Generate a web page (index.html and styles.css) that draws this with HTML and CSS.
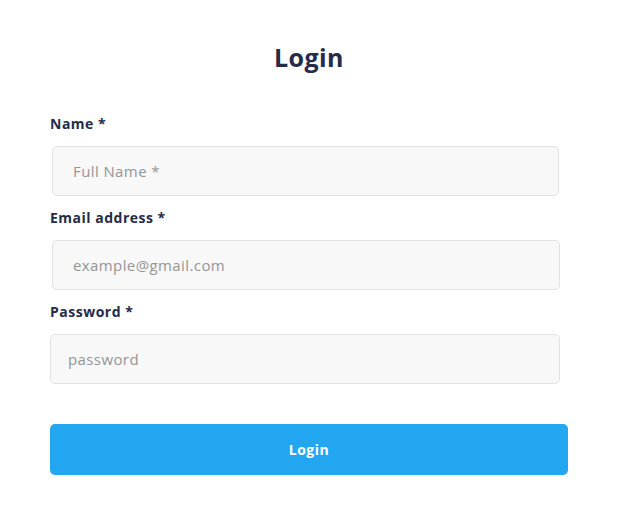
FILE: index.html
```html
<!DOCTYPE html>
<html>
<head>
<meta charset="utf-8">
<link rel="stylesheet" href="styles.css">
</head>
<body>
<main class="page">
  <h1 class="title">Login</h1>
  <form class="form">
    <label class="label">Name *</label>
    <input class="input input-a" type="text" placeholder="Full Name *">
    <label class="label">Email address *</label>
    <input class="input input-b" type="email" placeholder="example@gmail.com">
    <label class="label">Password *</label>
    <input class="input input-c" type="password" placeholder="password">
    <button class="btn" type="button">Login</button>
  </form>
</main>
</body>
</html>
```
FILE: styles.css
```css
* { box-sizing: border-box; }
html, body { margin: 0; padding: 0; background: #ffffff; }
body { font-family: "Open Sans", "DejaVu Sans", sans-serif; color: #252b48; }
.page { width: 618px; padding: 42px 50px 0 50px; }
.title {
  margin: 0 0 42px 0;
  height: 30px;
  line-height: 30px;
  font-size: 25px;
  font-weight: 700;
  text-align: center;
  color: #252b48;
  letter-spacing: 0.4px;
}
.form { display: flex; flex-direction: column; width: 518px; }
.label {
  display: block;
  height: 20px;
  line-height: 20px;
  font-size: 14px;
  font-weight: 700;
  color: #252b48;
  margin-bottom: 12px;
  letter-spacing: 0.5px;
}
.input {
  height: 50px;
  border: 1px solid #e2e2e2;
  border-radius: 5px;
  background: #f8f8f8;
  font-family: "Open Sans", "DejaVu Sans", sans-serif;
  font-size: 15px;
  color: #333;
  margin-bottom: 12px;
  outline: none;
  letter-spacing: 0.4px;
}
.input::placeholder { color: #959595; }
.input-a { margin-left: 2px; width: 507px; padding: 0 20px; }
.input-b { margin-left: 2px; width: 508px; padding: 0 20px; }
.input-c { width: 510px; padding: 0 17px; margin-bottom: 40px; }
.btn {
  height: 51px;
  width: 518px;
  border: none;
  border-radius: 5px;
  background: #22a6f0;
  color: #ffffff;
  font-family: "Open Sans", "DejaVu Sans", sans-serif;
  font-size: 14px;
  font-weight: 700;
  letter-spacing: 0.5px;
}
```
